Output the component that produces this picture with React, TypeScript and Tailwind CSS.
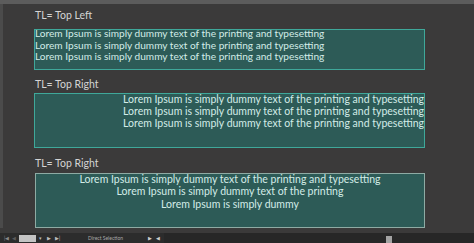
const line = 'Lorem Ipsum is simply dummy text of the printing and typesetting'

function Label({ children, className }: { children: React.ReactNode; className: string }) {
  return <div className={`pl-[32px] text-[10.5px] leading-[14px] text-[#d4d4d4] ${className}`}>{children}</div>
}

export default function App() {
  return (
    <div className="flex h-[243px] w-[474px] flex-col overflow-hidden bg-[#3b3a3a]" style={{ fontFamily: 'Lato, "Open Sans", sans-serif' }}>
      <div className="h-[4px] shrink-0 bg-[#5c5c5c]" />
      <div className="flex flex-1">
        <div className="w-[3px] shrink-0 bg-[#4b4b4b]" />
        <div className="flex flex-1 flex-col">
          <Label className="h-[25px] pt-[4px]">TL= Top Left</Label>

          <div className="ml-[31px] h-[41px] w-[391px] border border-[#3fa89a] bg-[#2d5b57]">
            <div className="-mt-[2px] text-left text-[10.1px] leading-[11.5px] text-[#d3ece8]">
              <div>{line}</div>
              <div>{line}</div>
              <div>{line}</div>
            </div>
          </div>

          <Label className="h-[23px] pt-[7px]">TL= Top Right</Label>

          <div className="ml-[31px] h-[55px] w-[391px] border border-[#3fa89a] bg-[#2d5b57]">
            <div className="-mt-[1px] text-right text-[10.5px] leading-[12px] text-[#d3ece8]">
              <div>{line}</div>
              <div>{line}</div>
              <div>{line}</div>
            </div>
          </div>

          <Label className="h-[25px] pt-[8px]">TL= Top Right</Label>

          <div className="ml-[32px] h-[55px] w-[390px] border border-[#8eaba4] bg-[#2d5b57]">
            <div className="-mt-[1px] text-center text-[10.5px] leading-[12.3px] text-[#d3ece8]">
              <div>{line}</div>
              <div>Lorem Ipsum is simply dummy text of the printing</div>
              <div>Lorem Ipsum is simply dummy</div>
            </div>
          </div>
        </div>
      </div>

      <div className="mt-[5px] flex h-[10px] shrink-0 items-center bg-[#2c2c2c] text-[5px] leading-[6px] text-[#8a8a8a]">
        <span className="ml-[4px] w-[8px]">|◀</span>
        <span className="w-[7px] text-[#5a5a5a]">◀</span>
        <div className="h-[7px] w-[17px] bg-[#c4c4c4]" />
        <span className="ml-[3px] w-[8px] text-[#bdbdbd]">▾</span>
        <span className="w-[8px] text-[#bdbdbd]">▶</span>
        <span className="w-[8px] text-[#bdbdbd]">▶|</span>
        <span className="ml-[25px] w-[60px] text-[#a8a8a8]">Direct Selection</span>
        <span className="w-[8px] text-[#cfcfcf]">▶</span>
        <span className="w-[8px] text-[#cfcfcf]">◀</span>
        <div className="flex h-full flex-1 items-end bg-[#272727]">
          <div className="ml-[222px] h-[7px] w-[6px] bg-[#a3a3a3]" />
        </div>
      </div>
    </div>
  )
}
